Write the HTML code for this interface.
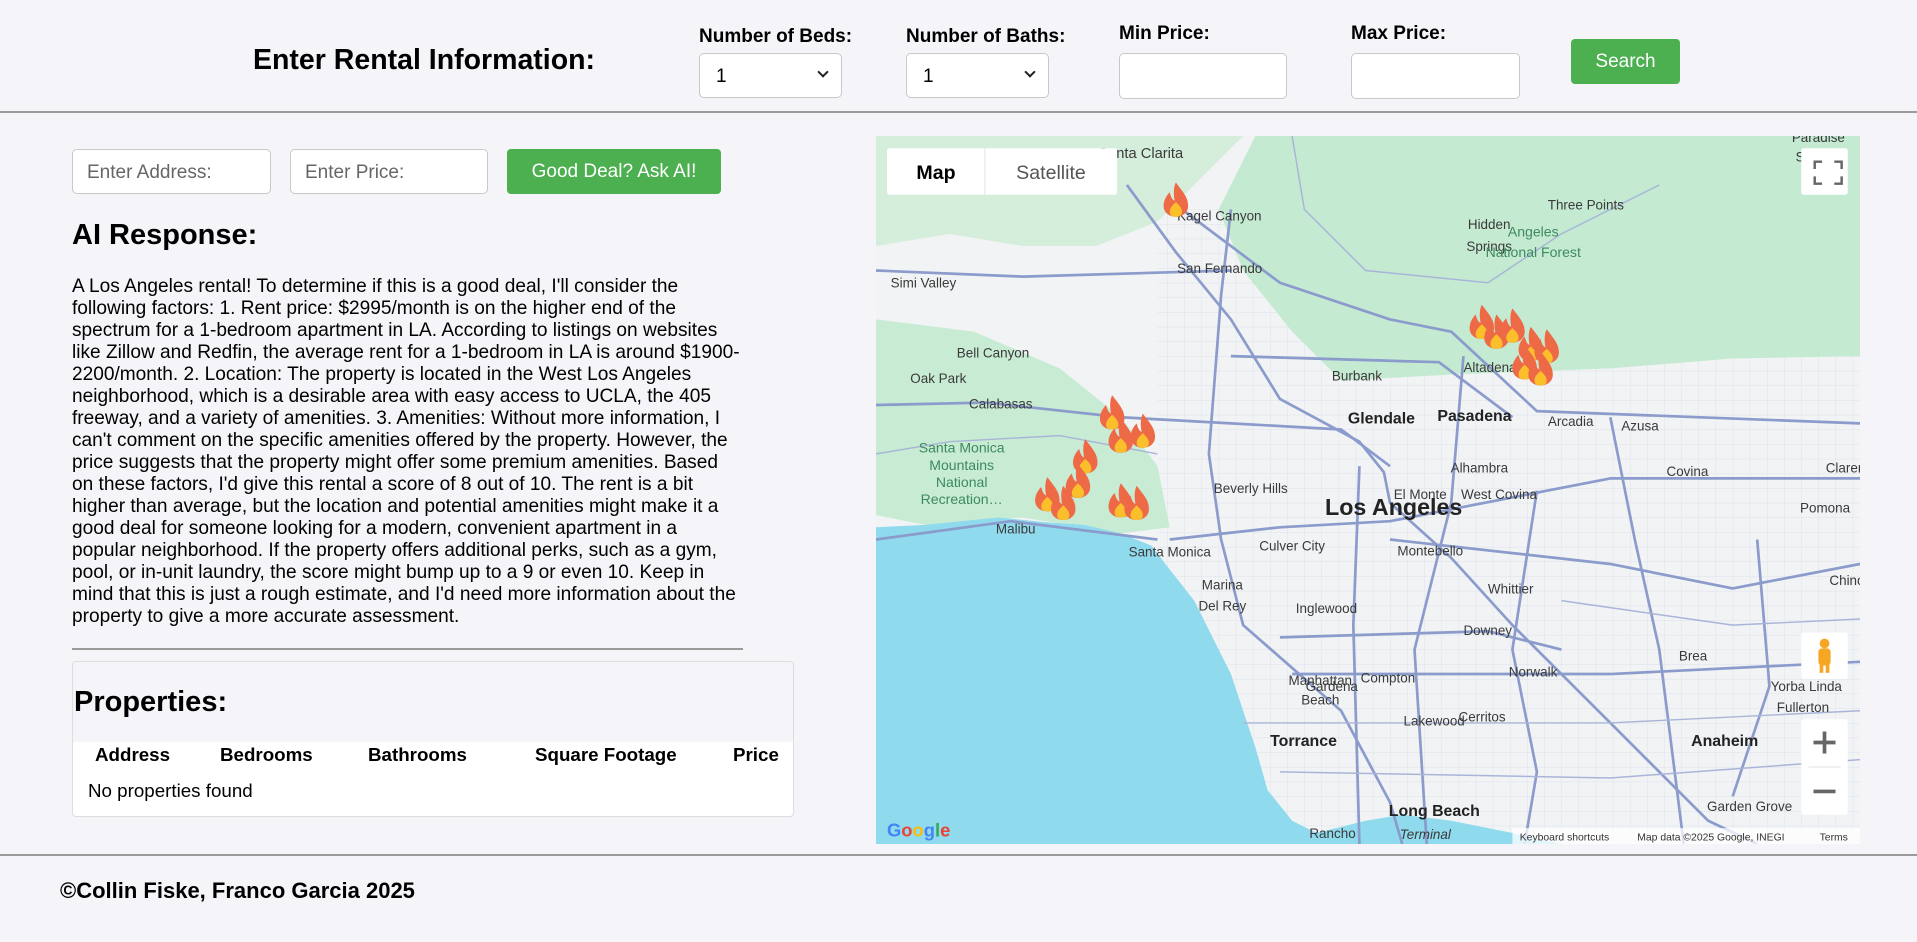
<!DOCTYPE html>
<html><head><meta charset="utf-8"><style>
*{box-sizing:border-box}
body{margin:0;width:1917px;height:942px;background:#f4f4f9;font-family:"Liberation Sans",Arial,sans-serif;position:relative;overflow:hidden;color:#000}
.a{position:absolute;white-space:nowrap}
.lbl{font-weight:bold;font-size:19px}
.sel,.inp{position:absolute;background:#fff;border:1px solid #c8c8c8;border-radius:5px}
.sel span{position:absolute;left:16px;top:12px;font-size:19px}
.sel i{position:absolute;right:14px;top:14px;width:8px;height:8px;border-right:2px solid #222;border-bottom:2px solid #222;transform:rotate(45deg)}
.btn{position:absolute;background:#4caf50;color:#fff;border-radius:4px;font-size:19px;text-align:center}
.ph{position:absolute;left:14px;top:12px;color:#666;font-size:19px}
#p{position:absolute;left:72px;top:276px;font-size:19.1px;line-height:22px}
#p div{white-space:nowrap}
</style></head><body>
<div class="a" style="left:253px;top:44px;font-size:28.5px;font-weight:bold">Enter Rental Information:</div>
<div class="a lbl" style="left:699px;top:26px">Number of Beds:</div>
<div class="sel" style="left:699px;top:53px;width:143px;height:45px"><span>1</span><i></i></div>
<div class="a lbl" style="left:906px;top:26px">Number of Baths:</div>
<div class="sel" style="left:906px;top:53px;width:143px;height:45px"><span>1</span><i></i></div>
<div class="a lbl" style="left:1119px;top:23px">Min Price:</div>
<div class="inp" style="left:1119px;top:53px;width:168px;height:46px"></div>
<div class="a lbl" style="left:1351px;top:23px">Max Price:</div>
<div class="inp" style="left:1351px;top:53px;width:169px;height:46px"></div>
<div class="btn" style="left:1571px;top:39px;width:109px;height:45px;line-height:45px">Search</div>
<div class="a" style="left:0;top:111px;width:1917px;height:2px;background:#9a9a9a"></div>

<div class="inp" style="left:72px;top:149px;width:199px;height:45px"><span class="ph">Enter Address:</span></div>
<div class="inp" style="left:290px;top:149px;width:198px;height:45px"><span class="ph">Enter Price:</span></div>
<div class="btn" style="left:507px;top:149px;width:214px;height:45px;line-height:45px">Good Deal? Ask AI!</div>
<div class="a" style="left:72px;top:219px;font-size:29px;font-weight:bold">AI Response:</div>
<div id="p">
<div>A Los Angeles rental! To determine if this is a good deal, I'll consider the</div>
<div>following factors: 1. Rent price: $2995/month is on the higher end of the</div>
<div>spectrum for a 1-bedroom apartment in LA. According to listings on websites</div>
<div>like Zillow and Redfin, the average rent for a 1-bedroom in LA is around $1900-</div>
<div>2200/month. 2. Location: The property is located in the West Los Angeles</div>
<div>neighborhood, which is a desirable area with easy access to UCLA, the 405</div>
<div>freeway, and a variety of amenities. 3. Amenities: Without more information, I</div>
<div>can't comment on the specific amenities offered by the property. However, the</div>
<div>price suggests that the property might offer some premium amenities. Based</div>
<div>on these factors, I'd give this rental a score of 8 out of 10. The rent is a bit</div>
<div>higher than average, but the location and potential amenities might make it a</div>
<div>good deal for someone looking for a modern, convenient apartment in a</div>
<div>popular neighborhood. If the property offers additional perks, such as a gym,</div>
<div>pool, or in-unit laundry, the score might bump up to a 9 or even 10. Keep in</div>
<div>mind that this is just a rough estimate, and I'd need more information about the</div>
<div>property to give a more accurate assessment.</div>
</div>
<div class="a" style="left:72px;top:648px;width:671px;height:2px;background:#999"></div>
<div class="a" style="left:72px;top:661px;width:722px;height:156px;border:1px solid #ddd;border-radius:4px;background:#fff;overflow:hidden">
 <div style="position:absolute;left:0;top:0;width:100%;height:80px;background:#f4f4f9"></div>
 <div style="position:absolute;left:1px;top:24px;font-size:29px;font-weight:bold">Properties:</div>
 <div style="position:absolute;left:22px;top:82px;font-size:18.75px;font-weight:bold">Address</div>
 <div style="position:absolute;left:147px;top:82px;font-size:18.75px;font-weight:bold">Bedrooms</div>
 <div style="position:absolute;left:295px;top:82px;font-size:18.75px;font-weight:bold">Bathrooms</div>
 <div style="position:absolute;left:462px;top:82px;font-size:18.75px;font-weight:bold">Square Footage</div>
 <div style="position:absolute;left:660px;top:82px;font-size:18.75px;font-weight:bold">Price</div>
 <div style="position:absolute;left:15px;top:118px;font-size:18.75px">No properties found</div>
</div>
<div class="a" style="left:0;top:854px;width:1917px;height:2px;background:#9a9a9a"></div>
<div class="a" style="left:60px;top:878px;font-size:22px;font-weight:bold">©Collin Fiske, Franco Garcia 2025</div>

<svg style="position:absolute;left:876px;top:136px" width="984" height="708" viewBox="0 0 804 579" preserveAspectRatio="none" font-family="Liberation Sans,Arial,sans-serif">
<defs>
<pattern id="g" width="14" height="12" patternUnits="userSpaceOnUse"><path d="M0 0H14M0 0V12" stroke="#dde1ec" stroke-width="0.7" fill="none"/></pattern>
<g id="f"><path d="M0,-14 C6,-6 10,-2 10,5 C10,11 5,14 0,14 C-5,14 -10,11 -10,5 C-10,0 -7,-4 -5,-6 C-4,-2 -3,0 -1,1 C-2,-5 -2,-10 0,-14Z" fill="#ee6a47"/><path d="M0,2 C3,5 5,7 5,10 C5,13 3,14 0,14 C-3,14 -5,13 -5,10 C-5,7 -3,5 0,2Z" fill="#fbbf2c"/></g>
</defs>
<rect width="804" height="579" fill="#f1f3f4"/>
<rect x="230" y="60" width="574" height="519" fill="url(#g)"/>
<path d="M310,0 H804 V180 L700,182 L600,190 L470,195 L380,200 L340,160 L300,110 L280,60 Z" fill="#c4ead2"/>
<path d="M0,0 H300 L260,40 L230,70 L180,90 L120,90 L60,80 L0,90Z" fill="#d5eedc"/>
<path d="M0,150 L80,160 L150,190 L200,230 L230,270 L240,320 L200,325 L120,312 L40,318 L0,310Z" fill="#c8ebd3"/>
<path d="M0,320 L40,318 L100,312 L140,316 L170,318 L200,325 L225,335 L238,352 L260,380 L275,410 L290,440 L300,470 L310,500 L320,535 L340,560 L360,570 L400,560 L430,555 L470,560 L520,570 L560,579 L0,579Z" fill="#90daee"/>
<g fill="none" stroke="#8b9bcb" stroke-width="2.2" stroke-linejoin="round">
<polyline points="205,40 245,95 290,150 330,215 395,250 415,275 420,300 470,345 520,400 590,470 680,560 720,579"/>
<polyline points="290,60 282,130 272,260 282,330 300,400 380,470 420,545 430,579"/>
<polyline points="395,270 390,400 395,579"/>
<polyline points="240,330 330,320 420,315 600,280 804,280"/>
<polyline points="0,220 90,218 200,230 290,235 380,240 420,270"/>
<polyline points="250,60 330,120 420,150 470,160 540,225 804,235"/>
<polyline points="330,410 500,405 560,420"/>
<polyline points="340,440 600,440 804,430"/>
<polyline points="540,290 520,420 540,520 530,579"/>
<polyline points="420,330 600,350 700,370 804,350"/>
<polyline points="720,330 730,450 700,540"/>
<polyline points="290,180 460,185 520,230"/>
<polyline points="0,110 120,115 290,110"/>
<polyline points="0,330 110,315 230,330"/>
<polyline points="480,180 470,300 440,420 450,579"/>
<polyline points="600,230 620,330 640,420 660,579"/>
</g>
<g fill="none" stroke="#a9b5d8" stroke-width="1.2">
<polyline points="340,0 350,60 400,110 500,120 560,80 640,40"/>
<polyline points="0,260 60,250 150,245 230,260"/>
<polyline points="300,480 600,480 804,470"/>
<polyline points="330,520 600,525 804,510"/>
<polyline points="560,380 700,400 804,395"/>
</g>
<g font-size="11" fill="#3a3a3a">
<text x="251" y="18" text-anchor="end" font-size="12">Santa Clarita</text>
<text x="246" y="69">Kagel Canyon</text>
<text x="246" y="112">San Fernando</text>
<text x="12" y="124">Simi Valley</text>
<text x="66" y="181">Bell Canyon</text>
<text x="28" y="202">Oak Park</text>
<text x="76" y="223">Calabasas</text>
<text x="98" y="325">Malibu</text>
<text x="240" y="344" text-anchor="middle">Santa Monica</text>
<text x="340" y="339" text-anchor="middle">Culver City</text>
<text x="283" y="371" text-anchor="middle">Marina</text>
<text x="283" y="388" text-anchor="middle">Del Rey</text>
<text x="343" y="390">Inglewood</text>
<text x="276" y="292">Beverly Hills</text>
<text x="393" y="200" text-anchor="middle">Burbank</text>
<text x="549" y="237">Arcadia</text>
<text x="609" y="241">Azusa</text>
<text x="480" y="193">Altadena</text>
<text x="501" y="76" text-anchor="middle">Hidden</text>
<text x="501" y="94" text-anchor="middle">Springs</text>
<text x="580" y="60" text-anchor="middle">Three Points</text>
<text x="770" y="5" text-anchor="middle">Paradise</text>
<text x="770" y="21" text-anchor="middle">Springs</text>
<text x="493" y="275" text-anchor="middle">Alhambra</text>
<text x="663" y="278" text-anchor="middle">Covina</text>
<text x="776" y="275">Clarem</text>
<text x="423" y="297">El Monte</text>
<text x="478" y="297">West Covina</text>
<text x="755" y="308">Pomona</text>
<text x="426" y="343">Montebello</text>
<text x="500" y="374">Whittier</text>
<text x="779" y="367">Chino Hi</text>
<text x="480" y="408">Downey</text>
<text x="517" y="442">Norwalk</text>
<text x="656" y="429">Brea</text>
<text x="363" y="449" text-anchor="middle">Manhattan</text>
<text x="363" y="465" text-anchor="middle">Beach</text>
<text x="351" y="454">Gardena</text>
<text x="396" y="447">Compton</text>
<text x="731" y="454">Yorba Linda</text>
<text x="431" y="482">Lakewood</text>
<text x="476" y="479">Cerritos</text>
<text x="736" y="471">Fullerton</text>
<text x="679" y="552">Garden Grove</text>
<text x="373" y="574" text-anchor="middle">Rancho</text>
<text x="428" y="575" font-style="italic">Terminal</text>
</g>
<g fill="#3d8a5e" font-size="11.5" text-anchor="middle">
<text x="70" y="259">Santa Monica</text><text x="70" y="273">Mountains</text><text x="70" y="287">National</text><text x="70" y="301">Recreation…</text>
<text x="537" y="82">Angeles</text><text x="537" y="99">National Forest</text>
</g>
<g fill="#222" font-weight="bold">
<text x="423" y="310" text-anchor="middle" font-size="19">Los Angeles</text>
<text x="413" y="235" text-anchor="middle" font-size="13">Glendale</text>
<text x="489" y="233" text-anchor="middle" font-size="13">Pasadena</text>
<text x="322" y="499" font-size="13">Torrance</text>
<text x="666" y="499" font-size="13">Anaheim</text>
<text x="419" y="556" font-size="13">Long Beach</text>
</g>
<use href="#f" x="245" y="52"/>
<use href="#f" x="193" y="226"/>
<use href="#f" x="218" y="241"/>
<use href="#f" x="200" y="245"/>
<use href="#f" x="171" y="262"/>
<use href="#f" x="140" y="293"/>
<use href="#f" x="153" y="300"/>
<use href="#f" x="165" y="282"/>
<use href="#f" x="200" y="298"/>
<use href="#f" x="213" y="300"/>
<use href="#f" x="495" y="152"/>
<use href="#f" x="507" y="160"/>
<use href="#f" x="520" y="155"/>
<use href="#f" x="535" y="170"/>
<use href="#f" x="548" y="172"/>
<use href="#f" x="530" y="185"/>
<use href="#f" x="543" y="190"/>
<rect x="9" y="10" width="188" height="38" rx="2" fill="#fff"/>
<line x1="89" y1="10" x2="89" y2="48" stroke="#e6e6e6"/>
<text x="49" y="35" text-anchor="middle" font-size="16" font-weight="bold" fill="#000">Map</text>
<text x="143" y="35" text-anchor="middle" font-size="16" fill="#555">Satellite</text>
<rect x="756" y="10" width="38" height="38" rx="2" fill="#fff"/>
<path d="M767 27V21H773M783 21H789V27M789 33V39H783M773 39H767V33" stroke="#666" stroke-width="2" fill="none"/>
<rect x="756" y="406" width="38" height="38" rx="2" fill="#fff"/>
<circle cx="775" cy="415" r="4" fill="#f5a623"/><rect x="770" y="419" width="10" height="14" rx="3" fill="#f5a623"/><rect x="771" y="431" width="3" height="8" fill="#f5a623"/><rect x="776" y="431" width="3" height="8" fill="#f5a623"/>
<rect x="756" y="477" width="38" height="78" rx="2" fill="#fff"/>
<line x1="762" y1="516" x2="788" y2="516" stroke="#e6e6e6"/>
<path d="M766 496H784M775 487V505M766 536H784" stroke="#666" stroke-width="3"/>
<text x="9" y="573" font-size="15" font-weight="bold"><tspan fill="#4285f4">G</tspan><tspan fill="#ea4335">o</tspan><tspan fill="#fbbc05">o</tspan><tspan fill="#4285f4">g</tspan><tspan fill="#34a853">l</tspan><tspan fill="#ea4335">e</tspan></text>
<rect x="520" y="566" width="284" height="13" fill="#fff" opacity="0.75"/>
<text x="526" y="576" font-size="8.5" fill="#333">Keyboard shortcuts</text>
<text x="622" y="576" font-size="8.5" fill="#333">Map data ©2025 Google, INEGI</text>
<text x="771" y="576" font-size="8.5" fill="#333">Terms</text>
</svg>
</body></html>
